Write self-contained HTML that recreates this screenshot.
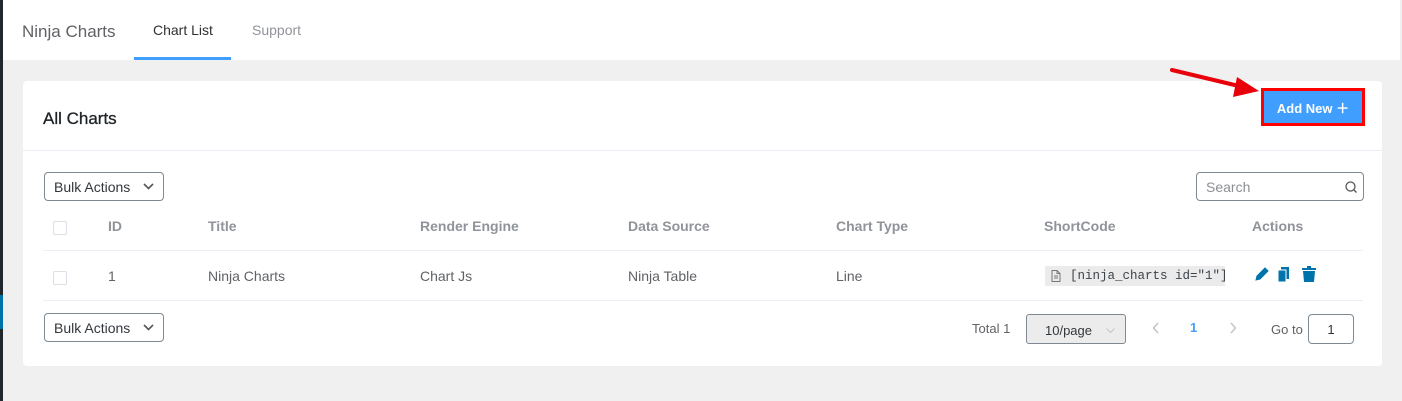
<!DOCTYPE html>
<html><head><meta charset="utf-8"><style>
*{box-sizing:border-box;margin:0;padding:0}
body{width:1402px;height:401px;background:#f0f0f1;font-family:"Liberation Sans",sans-serif;position:relative;overflow:hidden;color:#606266}
.abs{position:absolute}
.hdr{left:0;top:0;width:1400px;height:60px;background:#fff}
.lbar{left:0;top:0;width:3px;height:401px;background:#23282d}
.card{left:23px;top:81px;width:1359px;height:285px;background:#fff;border-radius:4px}
.sel{border:1px solid #7e8993;border-radius:4px;background:#fff;font-size:14px;color:#32373c}
.th{font-size:14px;font-weight:bold;color:#909399;top:218px}
.td{font-size:14px;color:#606266;top:268px}
.cb{width:14px;height:14px;border:1px solid #dcdfe6;border-radius:2px;left:53px}
</style></head><body>
<div class="abs hdr"></div>
<div class="abs lbar"></div>
<div class="abs" style="left:0;top:295px;width:3px;height:34px;background:#0073aa"></div>
<div class="abs" style="left:22px;top:22px;font-size:17px;color:#606266">Ninja Charts</div>
<div class="abs" style="left:153px;top:22px;font-size:14px;color:#303133">Chart List</div>
<div class="abs" style="left:252px;top:22px;font-size:14px;color:#909399">Support</div>
<div class="abs" style="left:134px;top:57px;width:97px;height:3px;background:#409eff"></div>
<div class="abs card"></div>
<div class="abs" style="left:43px;top:109px;font-size:17px;color:#1d2327;-webkit-text-stroke:0.3px #1d2327">All Charts</div>
<div class="abs" style="left:23px;top:150px;width:1359px;height:1px;background:#ebeef5"></div>
<div class="abs" style="left:1261px;top:88px;width:104px;height:38px;border:3px solid #f00;background:#409eff;color:#fff;font-size:13px;font-weight:bold;display:flex;align-items:center;justify-content:center">Add New ＋</div>
<svg class="abs" style="left:1165px;top:64px" width="100" height="40"><line x1="7" y1="6" x2="78" y2="23" stroke="#e8000b" stroke-width="4" stroke-linecap="round"/><polygon points="94,27 72,13 68,33" fill="#e8000b"/></svg>
<div class="abs sel" style="left:44px;top:172px;width:120px;height:29px;padding:6px 9px">Bulk Actions<svg style="position:absolute;right:9px;top:10px" width="11" height="7"><path d="M1 1l4.5 4.5L10 1" fill="none" stroke="#555" stroke-width="1.6"/></svg></div>
<div class="abs sel" style="left:1196px;top:172px;width:168px;height:29px;padding:6px 9px;color:#8c8f94;font-size:14px">Search
<svg style="position:absolute;right:5px;top:7px" width="14" height="14"><circle cx="6.5" cy="6.5" r="4.5" fill="none" stroke="#555" stroke-width="1.3"/><line x1="10" y1="10" x2="12.5" y2="12.5" stroke="#555" stroke-width="1.3"/></svg></div>
<div class="abs cb" style="top:221px"></div>
<div class="abs th" style="left:108px">ID</div>
<div class="abs th" style="left:208px">Title</div>
<div class="abs th" style="left:420px">Render Engine</div>
<div class="abs th" style="left:628px">Data Source</div>
<div class="abs th" style="left:836px">Chart Type</div>
<div class="abs th" style="left:1044px">ShortCode</div>
<div class="abs th" style="left:1252px">Actions</div>
<div class="abs" style="left:43px;top:250px;width:1320px;height:1px;background:#ebeef5"></div>
<div class="abs cb" style="top:271px"></div>
<div class="abs td" style="left:108px">1</div>
<div class="abs td" style="left:208px">Ninja Charts</div>
<div class="abs td" style="left:420px">Chart Js</div>
<div class="abs td" style="left:628px">Ninja Table</div>
<div class="abs td" style="left:836px">Line</div>
<div class="abs" style="left:1045px;top:266px;width:180px;height:20px;background:#ebebeb;font-family:'Liberation Mono',monospace;font-size:12.5px;color:#3c434a;padding:3px 0 0 25px;white-space:nowrap">[ninja_charts id="1"]
<svg style="position:absolute;left:6px;top:4px" width="10" height="12"><path d="M1 .5h5l3 3v8H1z M6 .5v3h3 M3 6h4 M3 8h4" fill="none" stroke="#777" stroke-width="1"/></svg></div>
<svg class="abs" style="left:1254px;top:265px" width="66" height="18">
<path d="M2 15l1-4 8-8 3 3-8 8z M10 4l3 3" fill="#0073aa" stroke="#0073aa" stroke-width="1"/>
<rect x="27" y="2" width="8" height="12" fill="#0073aa"/><rect x="24" y="5" width="8" height="12" fill="#0073aa" stroke="#fff" stroke-width="1"/>
<rect x="48" y="3" width="14" height="2" fill="#0073aa"/><rect x="53" y="1" width="4" height="2" fill="#0073aa"/><path d="M49 6h12l-1 11h-10z" fill="#0073aa"/></svg>
<div class="abs" style="left:43px;top:300px;width:1320px;height:1px;background:#ebeef5"></div>
<div class="abs sel" style="left:44px;top:313px;width:120px;height:29px;padding:6px 9px">Bulk Actions<svg style="position:absolute;right:9px;top:10px" width="11" height="7"><path d="M1 1l4.5 4.5L10 1" fill="none" stroke="#555" stroke-width="1.6"/></svg></div>
<div class="abs" style="left:972px;top:321px;font-size:13px;color:#606266">Total 1</div>
<div class="abs" style="left:1026px;top:314px;width:100px;height:30px;border:1px solid #7e8993;border-radius:3px;background:#ececec;font-size:13px;color:#32373c;padding:8px 0 0 18px">10/page<svg style="position:absolute;right:10px;top:13px" width="9" height="5"><path d="M.5.5l4 4 4-4" fill="none" stroke="#c0c4cc" stroke-width="1"/></svg></div>
<svg class="abs" style="left:1152px;top:322px" width="8" height="12"><path d="M6 1L1.5 6 6 11" fill="none" stroke="#c0c4cc" stroke-width="1.5"/></svg>
<div class="abs" style="left:1190px;top:320px;font-size:13px;font-weight:bold;color:#409eff">1</div>
<svg class="abs" style="left:1229px;top:322px" width="8" height="12"><path d="M2 1l4.5 5L2 11" fill="none" stroke="#c0c4cc" stroke-width="1.5"/></svg>
<div class="abs" style="left:1271px;top:322px;font-size:13px;color:#606266">Go to</div>
<div class="abs" style="left:1308px;top:314px;width:46px;height:30px;border:1px solid #7e8993;border-radius:4px;font-size:13px;color:#32373c;text-align:center;padding-top:7px">1</div>
</body></html>
